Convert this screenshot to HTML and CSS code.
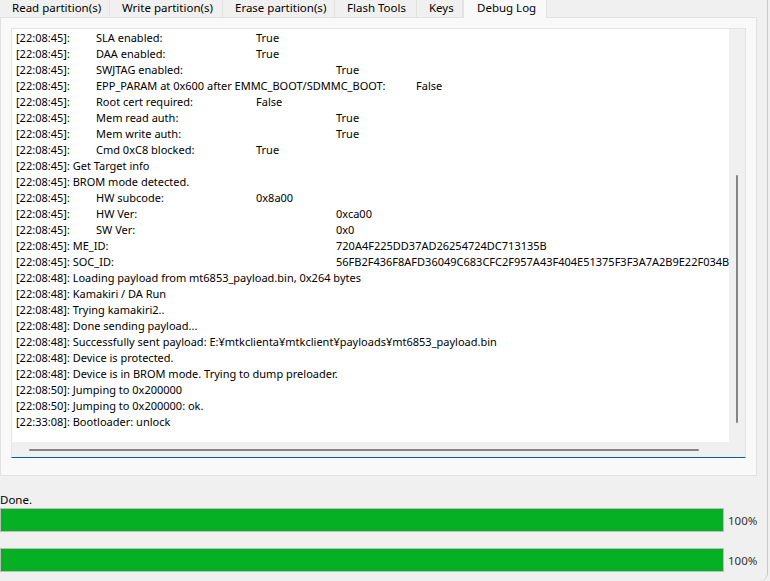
FILE: index.html
```html
<!DOCTYPE html>
<html lang="en">
<head>
    <meta charset="UTF-8">
    <meta name="viewport" content="width=device-width, initial-scale=1.0">
    <title>MTKClient - Debug Log</title>
    <link rel="stylesheet" href="styles.css">
</head>
<body>
    <div class="window">
        <div class="tabs">
            <div class="tab">Read partition(s)</div>
            <div class="tab">Write partition(s)</div>
            <div class="tab">Erase partition(s)</div>
            <div class="tab">Flash Tools</div>
            <div class="tab">Keys</div>
            <div class="tab active">Debug Log</div>
        </div>

        <div class="panel">
            <div class="log">
                <div class="log-text">
                    <div class="line"><span class="col w80">[22:08:45]:</span><span class="col w160">SLA enabled:</span>True</div>
                    <div class="line"><span class="col w80">[22:08:45]:</span><span class="col w160">DAA enabled:</span>True</div>
                    <div class="line"><span class="col w80">[22:08:45]:</span><span class="col w240">SWJTAG enabled:</span>True</div>
                    <div class="line"><span class="col w80">[22:08:45]:</span><span class="col w320">EPP_PARAM at 0x600 after EMMC_BOOT/SDMMC_BOOT:</span>False</div>
                    <div class="line"><span class="col w80">[22:08:45]:</span><span class="col w160">Root cert required:</span>False</div>
                    <div class="line"><span class="col w80">[22:08:45]:</span><span class="col w240">Mem read auth:</span>True</div>
                    <div class="line"><span class="col w80">[22:08:45]:</span><span class="col w240">Mem write auth:</span>True</div>
                    <div class="line"><span class="col w80">[22:08:45]:</span><span class="col w160">Cmd 0xC8 blocked:</span>True</div>
                    <div class="line">[22:08:45]: Get Target info</div>
                    <div class="line">[22:08:45]: BROM mode detected.</div>
                    <div class="line"><span class="col w80">[22:08:45]:</span><span class="col w160">HW subcode:</span>0x8a00</div>
                    <div class="line"><span class="col w80">[22:08:45]:</span><span class="col w240">HW Ver:</span>0xca00</div>
                    <div class="line"><span class="col w80">[22:08:45]:</span><span class="col w240">SW Ver:</span>0x0</div>
                    <div class="line"><span class="col w320">[22:08:45]: ME_ID:</span>720A4F225DD37AD26254724DC713135B</div>
                    <div class="line"><span class="col w320">[22:08:45]: SOC_ID:</span>56FB2F436F8AFD36049C683CFC2F957A43F404E51375F3F3A7A2B9E22F034B7</div>
                    <div class="line">[22:08:48]: Loading payload from mt6853_payload.bin, 0x264 bytes</div>
                    <div class="line">[22:08:48]: Kamakiri / DA Run</div>
                    <div class="line">[22:08:48]: Trying kamakiri2..</div>
                    <div class="line">[22:08:48]: Done sending payload...</div>
                    <div class="line">[22:08:48]: Successfully sent payload: E:¥mtkclienta¥mtkclient¥payloads¥mt6853_payload.bin</div>
                    <div class="line">[22:08:48]: Device is protected.</div>
                    <div class="line">[22:08:48]: Device is in BROM mode. Trying to dump preloader.</div>
                    <div class="line">[22:08:50]: Jumping to 0x200000</div>
                    <div class="line">[22:08:50]: Jumping to 0x200000: ok.</div>
                    <div class="line">[22:33:08]: Bootloader: unlock</div>
                </div>
                <div class="vscroll"><div class="vthumb"></div></div>
                <div class="hscroll"><div class="hthumb"></div></div>
                <div class="corner"></div>
            </div>
        </div>

        <div class="footer">
            <p class="status">Done.</p>
            <div class="progress-row">
                <div class="progress"><div class="progress-fill" style="width: 100%"></div></div>
                <span class="progress-label">100%</span>
            </div>
            <div class="progress-row">
                <div class="progress"><div class="progress-fill" style="width: 100%"></div></div>
                <span class="progress-label">100%</span>
            </div>
        </div>
    </div>
</body>
</html>
```

FILE: styles.css
```css
* {
    margin: 0;
    padding: 0;
    box-sizing: border-box;
}

body {
    font-family: 'Noto Sans', 'Liberation Sans', sans-serif;
    font-size: 11px;
    color: #000;
    background-color: #f0f0f0;
    width: 770px;
    height: 581px;
    overflow: hidden;
}

.window {
    width: 768px;
    height: 581px;
    border-right: 1px solid #c8c8c8;
    border-bottom-right-radius: 8px;
}

/* Tab strip */
.tabs {
    display: flex;
    height: 17px;
    position: relative;
    z-index: 1;
}

.tab {
    padding: 0 12px;
    line-height: 16px;
    height: 17px;
    font-size: 11.5px;
    border-right: 1px solid #e2e2e2;
    white-space: nowrap;
}

.tab:nth-child(1) { width: 110px; }
.tab:nth-child(2) { width: 113px; }
.tab:nth-child(3) { width: 112px; }
.tab:nth-child(4) { width: 82px; }
.tab:nth-child(5) { width: 46px; }

.tab.active {
    width: 84px;
    padding-left: 13px;
    height: 18px;
    background-color: #f9f9f9;
    border: 1px solid #e2e2e2;
    border-top: none;
    border-bottom: none;
}

/* Tab page */
.panel {
    width: 757px;
    height: 459px;
    background-color: #f9f9f9;
    border: 1px solid #e2e2e2;
    padding: 10px 0 0 10px;
}

.log {
    width: 735px;
    height: 430px;
    display: grid;
    grid-template-columns: 1fr 16px;
    grid-template-rows: 1fr 15px;
    border: 1px solid #e3e3e3;
    border-bottom: 1px solid #005fb8;
}

.log-text {
    background-color: #fff;
    padding: 1px 0 0 4px;
    line-height: 16px;
    overflow: hidden;
}

.line {
    white-space: nowrap;
}

.col {
    display: inline-block;
}

.w80 { width: 80px; }
.w160 { width: 160px; }
.w240 { width: 240px; }
.w320 { width: 320px; }

.vscroll {
    background-color: #f0f0f0;
    padding: 146px 0 0 7px;
}

.vthumb {
    width: 2px;
    height: 248px;
    background-color: #858585;
    border-radius: 1px;
}

.hscroll {
    background-color: #f0f0f0;
    padding: 7px 0 0 17px;
}

.hthumb {
    width: 670px;
    height: 2px;
    background-color: #858585;
    border-radius: 1px;
}

.corner {
    background-color: #f0f0f0;
}

/* Status and progress */
.footer {
    padding-top: 16px;
}

.status {
    line-height: 16px;
    font-size: 11.5px;
}

.progress-row {
    display: flex;
    align-items: center;
    margin-bottom: 16px;
}

.progress {
    width: 724px;
    height: 24px;
    border: 1px solid #bcbcbc;
    background-color: #e6e6e6;
}

.progress-fill {
    height: 100%;
    background-color: #06b025;
}

.progress-label {
    margin-left: 4px;
    font-size: 11.5px;
    color: #333;
}
```
